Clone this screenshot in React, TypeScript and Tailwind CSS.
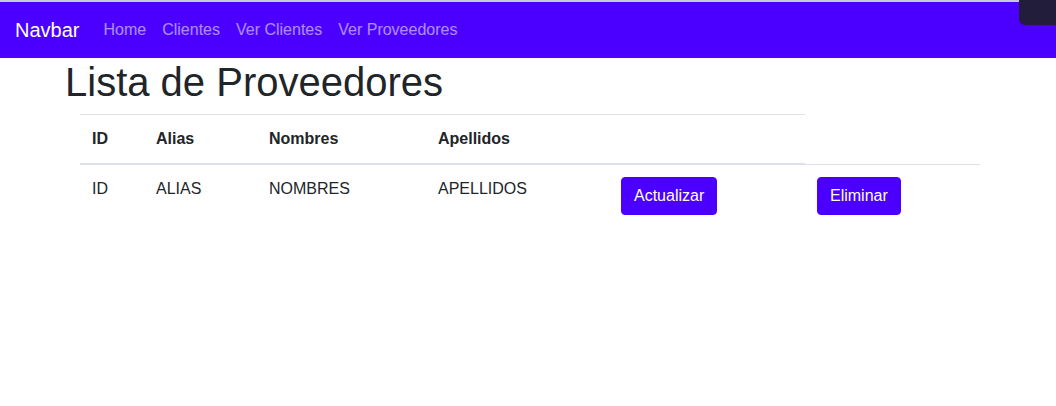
import React from "react";

const links = ["Home", "Clientes", "Ver Clientes", "Ver Proveedores"];

const columns = [
  { label: "ID", width: "w-[64px]" },
  { label: "Alias", width: "w-[113px]" },
  { label: "Nombres", width: "w-[169px]" },
  { label: "Apellidos", width: "w-[183px]" },
  { label: "", width: "w-[196px]" },
];

const App: React.FC = () => {
  return (
    <div
      className="relative min-h-[406px] bg-white text-[#212529]"
      style={{ fontFamily: '"Liberation Sans", Arial, sans-serif' }}
    >
      {/* navbar */}
      <nav className="h-[58px] border-t-2 border-[#c8c8d0] bg-[#4b00ff] flex items-center pl-[15px]">
        <span className="text-[20px] text-white mr-[16px] leading-[30px]">
          Navbar
        </span>
        <ul className="flex">
          {links.map((link) => (
            <li key={link}>
              <a className="block px-[8px] text-[16px] leading-[24px] text-white/55">
                {link}
              </a>
            </li>
          ))}
        </ul>
      </nav>

      <div className="absolute top-0 right-0 w-[37px] h-[25px] bg-[#221d3a] rounded-bl-[6px]" />

      <div className="pl-[65px]">
        <h1 className="text-[40px] leading-[48px] mb-[8px] font-normal">
          Lista de Proveedores
        </h1>
      </div>

      <div className="pl-[80px]">
        <table className="w-[900px] border-collapse text-[16px] leading-[24px]">
          <thead>
            <tr>
              {columns.map((col, i) => (
                <th
                  key={i}
                  className={`${col.width} text-left font-bold p-[12px] border-t border-b-2 border-[#dee2e6] align-bottom`}
                >
                  {col.label}
                </th>
              ))}
            </tr>
          </thead>
          <tbody>
            <tr>
              <td className="p-[12px] border-t border-[#dee2e6] align-top">ID</td>
              <td className="p-[12px] border-t border-[#dee2e6] align-top">ALIAS</td>
              <td className="p-[12px] border-t border-[#dee2e6] align-top">NOMBRES</td>
              <td className="p-[12px] border-t border-[#dee2e6] align-top">APELLIDOS</td>
              <td className="p-[12px] border-t border-[#dee2e6] align-top">
                <button className="bg-[#4b00ff] text-white rounded-[4px] px-[12px] py-[6px] leading-[24px] border border-[#4b00ff]">
                  Actualizar
                </button>
              </td>
              <td className="w-[175px] p-[12px] border-t border-[#dee2e6] align-top">
                <button className="bg-[#4b00ff] text-white rounded-[4px] px-[12px] py-[6px] leading-[24px] border border-[#4b00ff]">
                  Eliminar
                </button>
              </td>
            </tr>
          </tbody>
        </table>
      </div>
    </div>
  );
};

export default App;
